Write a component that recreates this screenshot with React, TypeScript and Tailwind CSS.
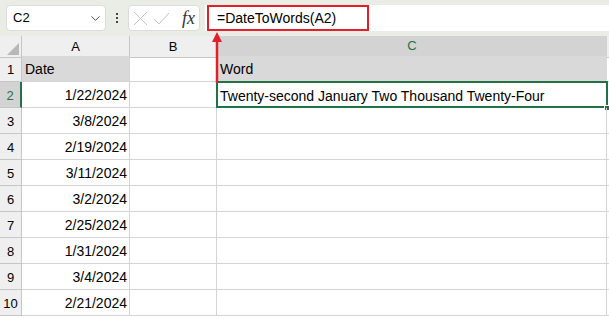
import { ChevronDown } from 'lucide-react';

const dates = [
  '1/22/2024',
  '3/8/2024',
  '2/19/2024',
  '3/11/2024',
  '3/2/2024',
  '2/25/2024',
  '1/31/2024',
  '3/4/2024',
  '2/21/2024',
];

const cols = 'grid grid-cols-[22px_108px_87px_390px_1fr]';

function App() {
  return (
    <div className="relative h-[319px] w-[609px] overflow-hidden bg-white font-['Liberation_Sans',sans-serif] text-[14px] text-black">
      {/* formula bar */}
      <div className="flex h-[36px] items-center bg-[#e9ede6] pl-[6px]">
        <div className="flex h-[26px] w-[100px] items-center justify-between rounded-[4px] border border-[#dcdcdc] bg-white pr-[2px] pl-[6px] text-[13px]">
          <span>C2</span>
          <ChevronDown size={15} strokeWidth={1.5} className="text-[#444]" />
        </div>
        <div className="flex w-[22px] flex-col items-center gap-[2px]">
          <span className="h-[2px] w-[2px] bg-[#444]" />
          <span className="h-[2px] w-[2px] bg-[#444]" />
          <span className="h-[2px] w-[2px] bg-[#444]" />
        </div>
        <div className="flex h-[26px] w-[72px] items-center gap-[5px] rounded-[4px] border border-[#dcdcdc] bg-white px-[4px]">
          <svg width="15" height="15" viewBox="0 0 15 15">
            <path d="M1 1L14 14M14 1L1 14" stroke="#c3c3c3" strokeWidth="1" fill="none" />
          </svg>
          <svg width="17" height="15" viewBox="0 0 17 15">
            <path d="M1 8L6 13L16 2" stroke="#c3c3c3" strokeWidth="1" fill="none" />
          </svg>
          <span className="ml-auto font-['Liberation_Serif',serif] text-[18px] italic leading-none text-[#333]">fx</span>
        </div>
        <div className="ml-[5px] flex h-[26px] flex-1 items-center bg-white">
          <div className="ml-[2px] flex h-[26px] w-[162px] items-center border-2 border-[#e0202a] pl-[8px]">
            =DateToWords(A2)
          </div>
        </div>
      </div>

      {/* column headers */}
      <div className={`${cols} h-[20px] text-[13px]`}>
        <div className="relative border-r border-b border-[#c6c6c6] bg-[#efefef]">
          <div className="absolute right-[2px] bottom-[2px] h-0 w-0 border-b-[12px] border-l-[12px] border-b-[#b8b8b8] border-l-transparent" />
        </div>
        <div className="flex items-center justify-center border-r border-b border-[#c6c6c6] bg-[#efefef]">A</div>
        <div className="flex items-center justify-center border-r border-b border-[#c6c6c6] bg-[#efefef]">B</div>
        <div className="flex items-center justify-center border-b-2 border-[#217346] bg-[#d3d3d3] text-[#217346]">C</div>
        <div className="border-b border-[#c6c6c6] bg-[#efefef]" />
      </div>

      {/* rows */}
      {Array.from({ length: 10 }, (_, i) => {
        const r = i + 1;
        const active = r === 2;
        return (
          <div key={r} className={`${cols} h-[26px]`}>
            <div
              className={`flex items-center justify-center border-b border-[#c6c6c6] pt-[2px] text-[13px] ${
                active ? 'border-r-2 border-r-[#217346] bg-[#d3d3d3] text-[#217346]' : 'border-r border-r-[#c6c6c6] bg-[#efefef]'
              }`}
            >
              {r}
            </div>
            <div
              className={`flex items-end border-r border-b border-[#d4d4d4] pb-[1px] ${
                r === 1 ? 'bg-[#d9d9d9] pl-[3px]' : 'justify-end pr-[2px]'
              }`}
            >
              {r === 1 ? 'Date' : dates[i - 1]}
            </div>
            <div className="border-r border-b border-[#d4d4d4]" />
            <div
              className={`relative flex items-end pb-[1px] pl-[3px] ${
                r === 1 ? 'border-b border-[#d4d4d4] bg-[#d9d9d9]' : active ? '' : 'border-r border-b border-[#d4d4d4]'
              }`}
            >
              {r === 1 && 'Word'}
              {active && (
                <>
                  <div className="absolute -top-[1px] -left-[1px] h-[27px] w-[392px] border-2 border-[#217346]" />
                  <div className="absolute -right-[3px] -bottom-[3px] h-[6px] w-[6px] border border-white bg-[#217346]" />
                  <span className="relative">Twenty-second January Two Thousand Twenty-Four</span>
                </>
              )}
            </div>
            <div className="border-b border-[#d4d4d4]" />
          </div>
        );
      })}

      {/* arrow from formula to cell */}
      <svg className="absolute top-[31px] left-[211px]" width="12" height="52" viewBox="0 0 12 52">
        <path d="M6 6V52" stroke="#e0202a" strokeWidth="2.5" />
        <path d="M1 11L6 1L11 11Z" fill="#e0202a" />
      </svg>
    </div>
  );
}

export default App;
